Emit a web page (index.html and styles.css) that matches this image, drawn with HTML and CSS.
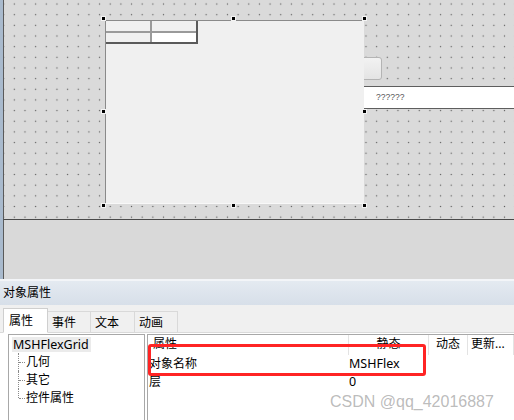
FILE: index.html
```html
<!DOCTYPE html>
<html lang="zh-CN">
<head>
    <meta charset="UTF-8">
    <title>对象属性</title>
    <link rel="stylesheet" href="styles.css">
</head>
<body>
    <!-- Form designer -->
    <div class="designer">
        <div class="canvas">
            <div class="ctl-button"></div>
            <div class="ctl-label">??????</div>

            <div class="form">
                <div class="flexgrid">
                    <div class="fg-cell fixed"></div>
                    <div class="fg-cell fixed"></div>
                    <div class="fg-cell fixed"></div>
                    <div class="fg-cell"></div>
                </div>
            </div>

            <span class="handle h-left h-top"></span>
            <span class="handle h-mid h-top"></span>
            <span class="handle h-right h-top"></span>
            <span class="handle h-left h-middle"></span>
            <span class="handle h-right h-middle"></span>
            <span class="handle h-left h-bottom"></span>
            <span class="handle h-mid h-bottom"></span>
            <span class="handle h-right h-bottom"></span>
        </div>
        <div class="tray"></div>
    </div>

    <!-- Property panel -->
    <div class="props">
        <div class="props-title">对象属性</div>

        <div class="tabs">
            <div class="tab active">属性</div>
            <div class="tab">事件</div>
            <div class="tab t-wide">文本</div>
            <div class="tab">动画</div>
        </div>

        <div class="pane">
            <div class="tree">
                <div class="tree-root"><span>MSHFlexGrid</span></div>
                <div class="tree-children">
                    <div class="tree-item">几何</div>
                    <div class="tree-item">其它</div>
                    <div class="tree-item">控件属性</div>
                </div>
            </div>

            <div class="prop-grid">
                <div class="pg-row pg-head">
                    <div class="pg-cell c-name">属性</div>
                    <div class="pg-cell c-static">静态</div>
                    <div class="pg-cell c-dyn">动态</div>
                    <div class="pg-cell c-upd">更新...</div>
                </div>
                <div class="pg-row">
                    <div class="pg-cell c-name">对象名称</div>
                    <div class="pg-cell c-value latin">MSHFlex</div>
                </div>
                <div class="pg-row">
                    <div class="pg-cell c-name">层</div>
                    <div class="pg-cell c-value latin">0</div>
                </div>
            </div>
        </div>

        <div class="mark"></div>
    </div>

    <div class="watermark">CSDN @qq_42016887</div>
</body>
</html>
```

FILE: styles.css
```css
* {
    box-sizing: border-box;
    margin: 0;
    padding: 0;
}

body {
    width: 514px;
    height: 420px;
    overflow: hidden;
    position: relative;
    background: #fff;
    font-family: "Noto Sans", "Noto Sans CJK SC", sans-serif;
    font-size: 12px;
    color: #000;
}

/* ---------- designer ---------- */

.designer {
    border-left: 3px solid #a9bacd;
}

.canvas {
    position: relative;
    height: 220px;
    border-left: 1px solid #5a5a5a;
    border-bottom: 1px solid #4a4a4a;
    background-color: #dadada;
    background-image: radial-gradient(circle, #5e5e5e 0.75px, transparent 1px);
    background-size: 10.67px 10.67px;
    background-position: 5px -1.3px;
    overflow: hidden;
}

.tray {
    height: 59px;
    border-left: 1px solid #5a5a5a;
    background: #d9d9d9;
}

.form {
    position: absolute;
    left: 101px;
    top: 20px;
    width: 259px;
    height: 184px;
    background: #f0f0f0;
    border-top: 1px solid #8a8a8a;
    border-left: 1px solid #8a8a8a;
    border-bottom: 1px solid #f8f8f8;
    z-index: 2;
}

.flexgrid {
    display: grid;
    grid-template-columns: 44px 44px;
    grid-template-rows: 10px 9px;
    gap: 2px;
    width: 92px;
    background: #9a9a9a;
    border-right: 2px solid #5a5a5a;
    border-bottom: 2px solid #5a5a5a;
}

.fg-cell {
    background: #fff;
}

.fg-cell.fixed {
    background: #f0f0f0;
}

.ctl-button {
    position: absolute;
    left: 326px;
    top: 57px;
    width: 52px;
    height: 23px;
    border: 1px solid #b4b4b4;
    border-radius: 3px;
    background: linear-gradient(#f2f2f2, #e4e4e4);
}

.ctl-label {
    position: absolute;
    left: 326px;
    top: 86px;
    width: 200px;
    height: 23px;
    padding-left: 46px;
    background: #fff;
    border-top: 1px solid #5e5e5e;
    border-bottom: 1px solid #5e5e5e;
    font-family: "Liberation Sans", sans-serif;
    font-size: 8.5px;
    line-height: 21px;
    color: #555;
}

.handle {
    position: absolute;
    width: 3px;
    height: 3px;
    background: #000;
    box-shadow: 0 0 0 1px #f4f4f4;
    z-index: 3;
}

.h-left { left: 98px; }
.h-mid { left: 228px; }
.h-right { left: 359px; }
.h-top { top: 17px; }
.h-middle { top: 110px; }
.h-bottom { top: 204px; }

/* ---------- property panel ---------- */

.props {
    position: relative;
    border-top: 2px solid #f3f5f8;
}

.props-title {
    height: 24px;
    padding-left: 3px;
    line-height: 24px;
    background: linear-gradient(#e4eaf1, #d7dfe9);
}

.tabs {
    display: flex;
    align-items: flex-end;
    height: 28px;
    padding-left: 3px;
    background: #f0f0f0;
    border-bottom: 1px solid #dadada;
}

.tab {
    width: 43px;
    height: 22px;
    margin-bottom: -1px;
    padding-left: 4px;
    line-height: 21px;
    background: #f0f0f0;
    border: 1px solid #d9d9d9;
    border-left: none;
}

.tab.t-wide {
    width: 44px;
}

.tab.active {
    width: 45px;
    height: 25px;
    padding-left: 5px;
    line-height: 23px;
    background: #fff;
    border: 1px solid #cfcfcf;
    border-bottom: 1px solid #fff;
}

.pane {
    display: flex;
    gap: 2px;
    height: 87px;
    padding: 1px 0 0 8px;
    background: #fff;
}

.tree {
    width: 137px;
    padding: 2px 3px;
    border: 1px solid #a8a8a8;
    border-bottom: none;
}

.tree-root {
    height: 16px;
    line-height: 15px;
}

.tree-root span {
    display: inline-block;
    padding: 0 2px 0 1px;
    background: #ebebeb;
    font-size: 12.5px;
}

.tree-children {
    margin-left: 6px;
}

.tree-item {
    position: relative;
    height: 18px;
    padding-left: 8px;
    line-height: 18px;
}

.tree-item::before {
    content: "";
    position: absolute;
    left: 0;
    top: 0;
    height: 100%;
    border-left: 1px dotted #8a8a8a;
}

.tree-item:last-child::before {
    height: 50%;
}

.tree-item::after {
    content: "";
    position: absolute;
    left: 1px;
    top: 9px;
    width: 6px;
    border-top: 1px dotted #8a8a8a;
}

.prop-grid {
    flex: 1;
    border: 1px solid #a8a8a8;
    border-right: none;
    border-bottom: none;
}

.pg-row {
    display: flex;
    height: 18px;
    line-height: 18px;
}

.pg-row.pg-head {
    height: 20px;
    line-height: 18px;
}

.pg-cell {
    white-space: nowrap;
    overflow: hidden;
}

.c-name {
    width: 201px;
    padding-left: 1px;
}

.pg-head .c-name {
    padding-left: 5px;
}

.pg-head .pg-cell {
    border-right: 1px solid #e3e3e3;
}

.c-static {
    width: 80px;
    text-align: center;
}

.c-dyn {
    width: 39px;
    text-align: center;
}

.c-upd {
    flex: 1;
    padding-left: 3px;
    border-right: none;
}

.latin {
    font-size: 12.5px;
}

.mark {
    position: absolute;
    left: 148px;
    top: 63px;
    width: 278px;
    height: 32px;
    border: 3px solid #ff2424;
    border-radius: 3px;
}

.watermark {
    position: absolute;
    left: 330px;
    top: 393px;
    font-family: "Liberation Sans", sans-serif;
    font-size: 16px;
    line-height: 18px;
    color: rgba(150, 150, 150, 0.65);
}
```
